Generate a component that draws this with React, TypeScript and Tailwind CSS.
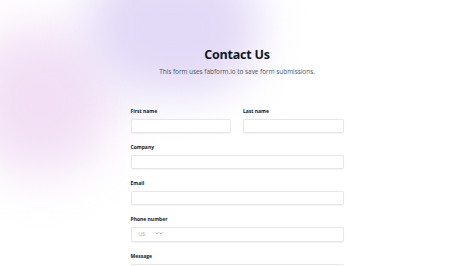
import React from "react";

function Field({ label, children }: { label: string; children?: React.ReactNode }) {
  return (
    <div className="flex flex-col">
      <label className="text-[5px] font-bold text-gray-900 leading-none mb-[5px]">{label}</label>
      {children ?? (
        <div className="h-[14px] rounded-[2px] border border-gray-200 bg-white shadow-[0_0.5px_1px_rgba(0,0,0,0.05)]" />
      )}
    </div>
  );
}

export default function App() {
  return (
    <div
      className="relative w-[474px] h-[266px] overflow-hidden bg-white"
      style={{ fontFamily: "'Open Sans', 'Noto Sans', sans-serif" }}
    >
      {/* decorative blobs */}
      <div className="absolute left-[-35px] top-[25px] w-[150px] h-[150px] rounded-full bg-[#efd8f3] blur-[24px] opacity-80" />
      <div className="absolute left-[85px] top-[-40px] w-[175px] h-[135px] rounded-full bg-[#e3daf7] blur-[22px]" />

      <div className="relative flex flex-col items-center pt-[49px]">
        <h1 className="text-[12.5px] font-bold text-gray-900 leading-none tracking-[-0.2px]">Contact Us</h1>
        <p className="mt-[7px] text-[6.4px] text-gray-600 leading-none">
          This form uses fabform.io to save form submissions.
        </p>

        <form className="mt-[34px] w-[213px] flex flex-col gap-[12px]">
          <div className="grid grid-cols-2 gap-[12px]">
            <Field label="First name" />
            <Field label="Last name" />
          </div>
          <Field label="Company" />
          <Field label="Email" />
          <Field label="Phone number">
            <div className="h-[15px] rounded-[2px] border border-gray-200 bg-white shadow-[0_0.5px_1px_rgba(0,0,0,0.05)] flex items-center pl-[7px] text-[5px] text-gray-400">
              <span>US</span>
              <svg className="ml-[10px]" width="8" height="4" viewBox="0 0 16 8" fill="none" stroke="#9ca3af" strokeWidth="1.5">
                <path d="M1 1l3 3 3-3" />
                <path d="M9 1l3 3 3-3" />
              </svg>
            </div>
          </Field>
          <Field label="Message" />
        </form>
      </div>
    </div>
  );
}
